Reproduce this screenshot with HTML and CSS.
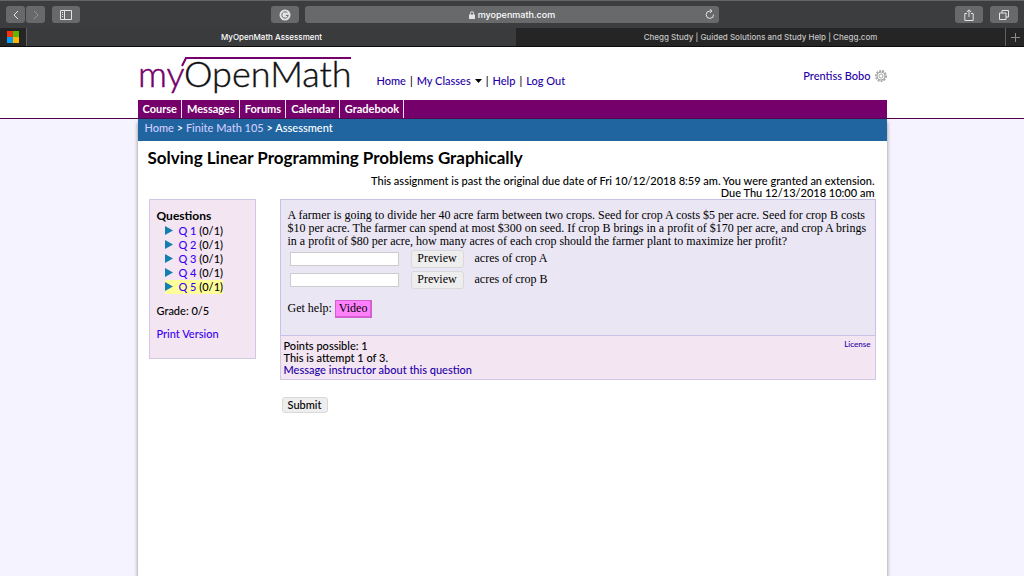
FILE: index.html
```html
<!DOCTYPE html>
<html lang="en">
<head>
  <meta charset="utf-8">
  <title>MyOpenMath Assessment</title>
  <link rel="stylesheet" href="styles.css">
</head>
<body>
  <div class="browser">
    <div class="toolbar">
      <div class="tool-left">
        <div class="history">
          <button class="tool" aria-label="Back"><svg width="8" height="12" viewBox="0 0 8 12"><path d="M6 2L2 6l4 4"/></svg></button>
          <button class="tool dim" aria-label="Forward"><svg width="8" height="12" viewBox="0 0 8 12"><path d="M2 2l4 4-4 4"/></svg></button>
        </div>
        <button class="tool wide" aria-label="Sidebar"><svg width="12" height="10" viewBox="0 0 12 10"><path d="M.5.5h11v9H.5zM4.5.5v9M2 2.5h1M2 4.5h1M2 6.5h1"/></svg></button>
        <button class="tool wide grammar" aria-label="Grammarly"><svg width="12" height="12" viewBox="0 0 12 12"><circle class="disc" cx="6" cy="6" r="5.5"/><path class="gee" d="M8.4 3.8A3.2 3.2 0 1 0 9.2 6.4H6.8"/></svg></button>
      </div>
      <div class="address">
        <svg class="lock" width="6" height="8" viewBox="0 0 6 8"><path d="M1.4 4V2.3a1.6 1.6 0 0 1 3.2 0V4"/><rect class="disc" x="0" y="3.5" width="6" height="4.5" rx=".6"/></svg>
        <span>myopenmath.com</span>
        <button class="reload" aria-label="Reload"><svg width="10" height="11" viewBox="0 0 10 11"><path d="M8.6 5.6A3.7 3.7 0 1 1 5 2h1.6M5 .2L6.9 2 5 3.9"/></svg></button>
      </div>
      <div class="tool-right">
        <button class="tool wide" aria-label="Share"><svg width="12" height="12" viewBox="0 0 12 12"><path d="M4 4.5H1.8v7h8.4v-7H8M6 8V1M3.8 3L6 .8 8.2 3"/></svg></button>
        <button class="tool wide" aria-label="Tabs"><svg width="10" height="10" viewBox="0 0 10 10"><path d="M.5 3h6.5v6.5H.5zM3 3V.5h6.5V7H7"/></svg></button>
      </div>
    </div>
    <div class="tabs">
      <div class="pinned"><svg width="12" height="12" viewBox="0 0 12 12"><path fill="#f8330c" d="M0 0h6v6H0z"/><path fill="#5db800" d="M6 0h6v6H6z"/><path fill="#0c9df0" d="M0 6h6v6H0z"/><path fill="#fbb700" d="M6 6h6v6H6z"/></svg></div>
      <div class="tab active">MyOpenMath Assessment</div>
      <div class="tab">Chegg Study | Guided Solutions and Study Help | Chegg.com</div>
      <button class="newtab" aria-label="New tab"><svg width="9" height="9" viewBox="0 0 9 9"><path d="M4.5 0v9M0 4.5h9"/></svg></button>
    </div>
  </div>

  <header class="header">
    <div class="inner">
      <div class="topline">
        <svg class="logo" width="216" height="44" viewBox="0 0 216 44">
          <text class="logo-my" x="0" y="31">my</text>
          <text class="logo-name" x="46" y="31">OpenMath</text>
          <path d="M44 10l4-8h165"/>
        </svg>
        <div class="links">
          <a href="#">Home</a> <span>|</span> <a href="#">My Classes</a> <svg width="7" height="4" viewBox="0 0 7 4"><path d="M0 0h7L3.5 4z"/></svg> <span>|</span> <a href="#">Help</a> <span>|</span> <a href="#">Log Out</a>
        </div>
        <div class="user">
          <a href="#">Prentiss Bobo</a>
          <svg width="12" height="12" viewBox="0 0 12 12"><circle class="teeth" cx="6" cy="6" r="5"/><circle cx="6" cy="6" r="4"/><circle cx="6" cy="6" r="2"/></svg>
        </div>
      </div>
      <nav class="nav">
        <a href="#">Course</a><a href="#">Messages</a><a href="#">Forums</a><a href="#">Calendar</a><a href="#">Gradebook</a>
      </nav>
    </div>
  </header>

  <main class="page">
    <div class="crumbs"><a href="#">Home</a> &gt; <a href="#">Finite Math 105</a> &gt; Assessment</div>
    <h1>Solving Linear Programming Problems Graphically</h1>
    <p class="due">This assignment is past the original due date of Fri 10/12/2018 8:59 am. You were granted an extension.<br>Due Thu 12/13/2018 10:00 am</p>
    <div class="columns">
      <aside class="sidebar">
        <h2>Questions</h2>
        <ul>
          <li><svg width="8" height="9" viewBox="0 0 8 9"><path d="M0 0l8 4.5L0 9z"/></svg><a href="#">Q 1</a> (0/1)</li>
          <li><svg width="8" height="9" viewBox="0 0 8 9"><path d="M0 0l8 4.5L0 9z"/></svg><a href="#">Q 2</a> (0/1)</li>
          <li><svg width="8" height="9" viewBox="0 0 8 9"><path d="M0 0l8 4.5L0 9z"/></svg><a href="#">Q 3</a> (0/1)</li>
          <li><svg width="8" height="9" viewBox="0 0 8 9"><path d="M0 0l8 4.5L0 9z"/></svg><a href="#">Q 4</a> (0/1)</li>
          <li class="current"><svg width="8" height="9" viewBox="0 0 8 9"><path d="M0 0l8 4.5L0 9z"/></svg><a href="#">Q 5</a> (0/1)</li>
        </ul>
        <p>Grade: 0/5</p>
        <p><a href="#">Print Version</a></p>
      </aside>
      <form class="assessment" onsubmit="return false">
        <div class="question">
          <p>A farmer is going to divide her 40 acre farm between two crops. Seed for crop A costs $5 per acre. Seed for crop B costs $10 per acre. The farmer can spend at most $300 on seed. If crop B brings in a profit of $170 per acre, and crop A brings in a profit of $80 per acre, how many acres of each crop should the farmer plant to maximize her profit?</p>
          <div class="answer"><input type="text" id="crop-a"><button type="button">Preview</button><label for="crop-a">acres of crop A</label></div>
          <div class="answer"><input type="text" id="crop-b"><button type="button">Preview</button><label for="crop-b">acres of crop B</label></div>
          <div class="help">Get help: <button type="button">Video</button></div>
        </div>
        <div class="points">
          <div>Points possible: 1<br>This is attempt 1 of 3.<br><a href="#">Message instructor about this question</a></div>
          <a class="license" href="#">License</a>
        </div>
        <button class="submit" type="submit">Submit</button>
      </form>
    </div>
  </main>
</body>
</html>
```
FILE: styles.css
```css
* {
  box-sizing: border-box;
}

body {
  margin: 0;
  min-height: 100vh;
  display: flex;
  flex-direction: column;
  background: #f5f3ff;
  color: #000;
  font: 500 11px/12px "Trebuchet MS", Lato, sans-serif;
}

a {
  color: #1f00a8;
  text-decoration: none;
}

p, h1, h2, ul {
  margin: 0;
  padding: 0;
}

button {
  font: inherit;
  color: inherit;
  padding: 0;
}

/* browser */
.browser {
  background: #3c3d3f;
  border-top: 1px solid #636567;
  color: #fff;
  font: 500 9px/18px Inter, sans-serif;
}

.browser svg {
  fill: none;
  stroke: #e4e4e4;
}

.browser .disc {
  fill: #e4e4e4;
  stroke: none;
}

.browser .gee {
  stroke: #666769;
}

.toolbar {
  display: flex;
  align-items: center;
  gap: 6px;
  height: 27px;
  padding: 0 6px;
}

.tool-left,
.tool-right {
  display: flex;
  flex: 1;
  gap: 7px;
}

.tool-right {
  justify-content: flex-end;
}

.history {
  display: flex;
  gap: 1px;
}

.tool {
  display: flex;
  align-items: center;
  justify-content: center;
  width: 19px;
  height: 17px;
  border: 0;
  border-radius: 3px;
  background: #68696b;
}

.tool.wide {
  width: 28px;
}

.grammar {
  margin-left: auto;
}

.tool.dim svg {
  stroke: #929394;
}

.address {
  display: flex;
  align-items: center;
  justify-content: center;
  gap: 3px;
  position: relative;
  width: 41%;
  height: 17px;
  border-radius: 3px;
  background: #68696b;
}

.reload {
  position: absolute;
  right: 4px;
  top: 3px;
  display: flex;
  border: 0;
  background: none;
}

.tabs {
  display: flex;
  height: 19px;
  background: #252525;
  border-bottom: 1px solid #0c0c0c;
  font-size: 8px;
}

.pinned {
  display: flex;
  align-items: center;
  justify-content: center;
  width: 27px;
  border-right: 1px solid #606062;
}

.browser .pinned svg {
  stroke: none;
}

.tab {
  flex: 1;
  text-align: center;
  color: #c4c4c4;
}

.tab.active {
  background: #3a3b3d;
  color: #fff;
}

.newtab {
  width: 19px;
  border: 0;
  border-left: 1px solid #606062;
  background: none;
}

.newtab svg {
  display: block;
  margin: auto;
  stroke: #8c8c8c;
}

/* page header */
.header {
  background: #fff;
  border-bottom: 1px solid #4d0049;
}

.inner,
.page {
  width: 100%;
  max-width: 749px;
  margin: 0 auto;
}

.topline {
  display: flex;
  align-items: flex-start;
  height: 53px;
  padding-top: 9px;
}

.logo {
  overflow: visible;
  fill: none;
  font-family: "Century Gothic", Lato, sans-serif;
  font-size: 36px;
  font-weight: 300;
}

.logo path {
  stroke: #75006b;
  stroke-width: 2;
}

.logo-my {
  fill: #75006b;
  stroke: #75006b;
  stroke-width: .5;
}

.logo-name {
  fill: #111;
  stroke: #111;
  stroke-width: .4;
}

.links {
  flex: 1;
  display: flex;
  align-items: center;
  gap: 4px;
  padding: 19px 0 0 23px;
}

.user {
  display: flex;
  align-items: center;
  gap: 4px;
  padding-top: 14px;
}

.user svg {
  fill: none;
  stroke: #aaa;
}

.user .teeth {
  stroke-width: 2;
  stroke-dasharray: 2 1;
}

.nav {
  display: flex;
  height: 18px;
  background: #75006b;
}

.nav a {
  padding: 0 4px 0 5px;
  border-right: 1px solid #f3e4f1;
  color: #fff;
  font-weight: 700;
  line-height: 18px;
}

/* content */
.page {
  flex: 1;
  background: #fff;
  box-shadow: 0 3px 4px #888;
}

.crumbs {
  height: 22px;
  padding: 0 7px;
  background: #20659f;
  color: #fff;
  line-height: 18px;
}

.crumbs a {
  color: #d0ccff;
}

h1 {
  padding: 7px 10px 0;
  font-size: 17px;
  line-height: 20px;
}

.due {
  padding: 7px 12px 0;
  text-align: right;
}

.columns {
  display: flex;
  align-items: flex-start;
  gap: 24px;
  padding: 0 11px;
}

.sidebar {
  width: 107px;
  height: 160px;
  padding: 8px 7px;
  border: 1px solid #d0c8e4;
  background: #f3e5f2;
}

.sidebar h2 {
  font-size: 12px;
  line-height: 16px;
}

.sidebar ul {
  list-style: none;
  padding-left: 8px;
}

.sidebar li {
  width: 58px;
  line-height: 14px;
  white-space: nowrap;
}

.sidebar li svg {
  margin-right: 6px;
  fill: #137eb0;
}

.sidebar .current {
  background: #ffff99;
}

.sidebar p {
  padding-top: 11px;
}

.sidebar a {
  color: #3a00f0;
}

.assessment {
  flex: 1;
}

.question {
  height: 137px;
  padding: 9px 7px;
  border: 1px solid #c8c3e6;
  background: #eae6f4;
  font: 12px/13px "Times New Roman", "Liberation Serif", serif;
}

.answer {
  display: flex;
  align-items: center;
  height: 21px;
  padding-left: 2px;
}

.answer input {
  width: 109px;
  height: 14px;
  padding: 0 2px;
  border: 1px solid #ccc;
}

.answer button {
  width: 53px;
  height: 18px;
  margin: 0 11px 0 12px;
  border: 1px solid #d9d9d9;
  border-radius: 3px;
  background: #eee;
}

.help {
  padding-top: 10px;
}

.help button {
  height: 18px;
  padding: 0 3px;
  border: 1px solid #d260ce;
  border-width: 1px 2px 2px 1px;
  background: #ff80ff;
}

.points {
  display: flex;
  justify-content: space-between;
  height: 44px;
  padding: 4px 4px 0 3px;
  border: 1px solid #d0c8e4;
  border-top: 0;
  background: #f3e5f2;
}

.license {
  font-size: 8px;
  line-height: 8px;
}

.submit {
  width: 46px;
  height: 16px;
  margin: 17px 2px;
  border: 1px solid #d9d9d9;
  border-radius: 3px;
  background: #eee;
}
```
